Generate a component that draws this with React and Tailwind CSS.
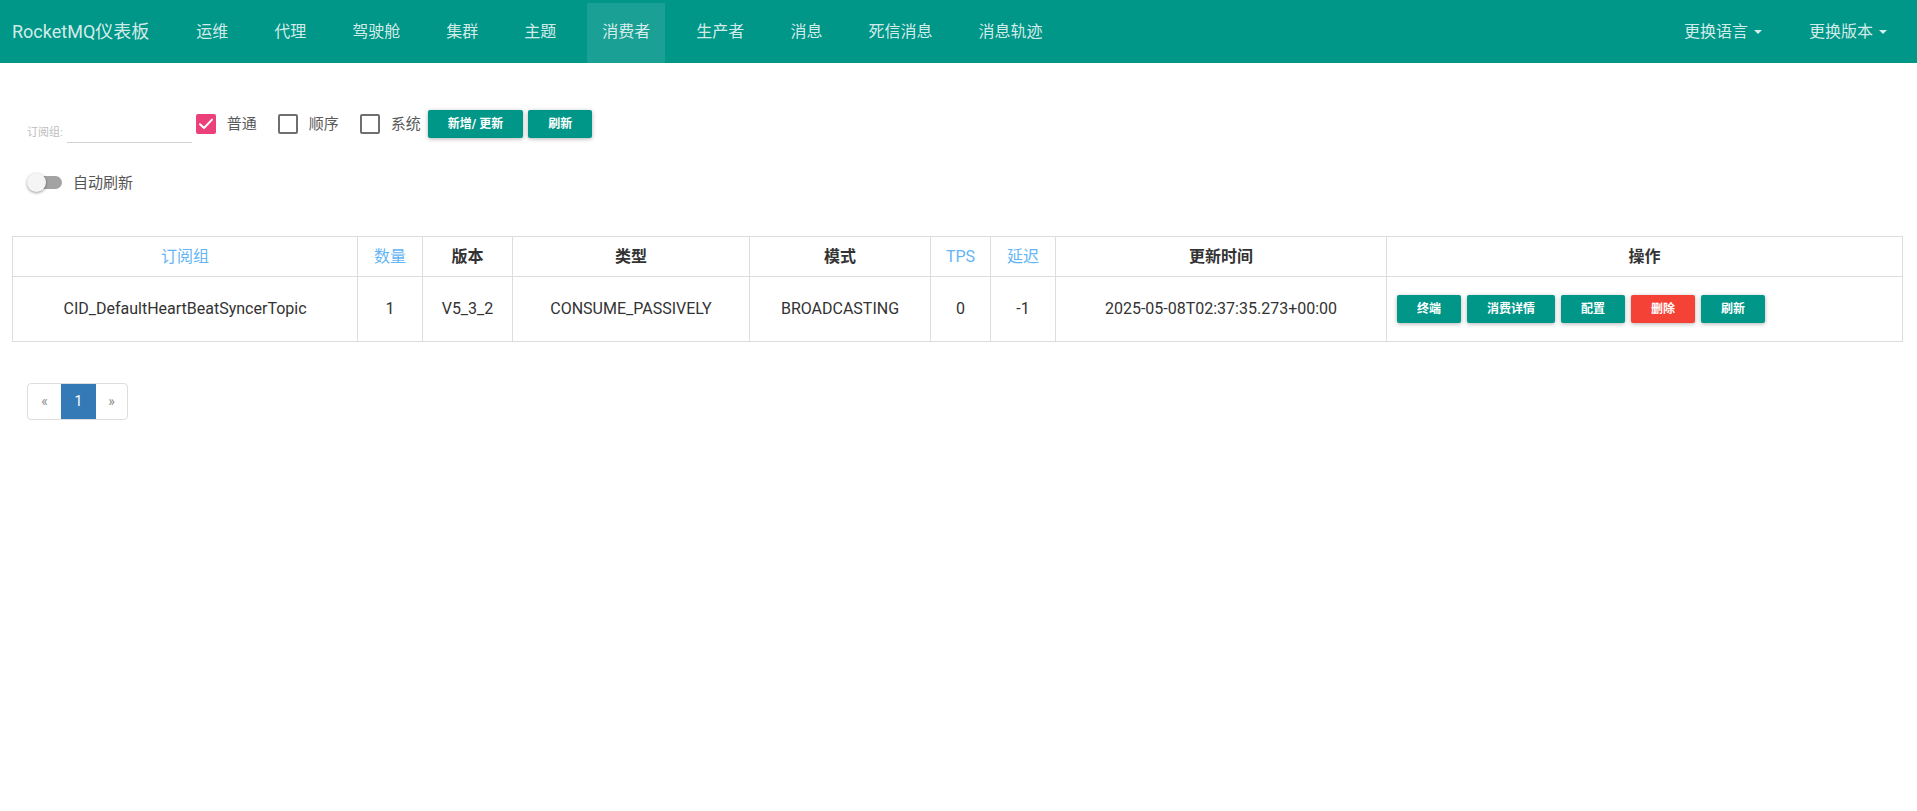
import React from "react";

const navItems = ["运维", "代理", "驾驶舱", "集群", "主题", "消费者", "生产者", "消息", "死信消息", "消息轨迹"];

function Caret() {
  return <span className="ml-[6px] inline-block h-0 w-0 border-x-[4px] border-t-[4px] border-x-transparent border-t-[rgba(255,255,255,0.84)] align-middle" />;
}

function Btn({ children, red }) {
  return (
    <button
      className={
        "h-[28px] rounded-[2px] px-[20px] text-[12px] font-bold text-white shadow-[0_1px_4px_rgba(0,0,0,0.3)] " +
        (red ? "bg-[#f44336]" : "bg-[#009688]")
      }
    >
      {children}
    </button>
  );
}

function Check({ checked, label, last }) {
  return (
    <div className={"mt-[4px] flex items-center " + (last ? "mr-[7px]" : "mr-[21px]")}>
      {checked ? (
        <span className="flex h-[20px] w-[20px] items-center justify-center rounded-[2px] bg-[#ec407a]">
          <svg width="18" height="18" viewBox="0 0 18 18" fill="none">
            <path d="M3 9.3 L7 13 L15 4.6" stroke="white" strokeWidth="2" strokeLinecap="round" strokeLinejoin="round" />
          </svg>
        </span>
      ) : (
        <span className="block h-[20px] w-[20px] rounded-[2px] border-2 border-[#6f6f6f]" />
      )}
      <span className="ml-[11px] text-[15px] leading-[20px] text-[#5a5a5a]">{label}</span>
    </div>
  );
}

export default function App() {
  const th = "border border-[#dddddd] h-[40px] text-center text-[16px]";
  const thBlue = th + " font-normal text-[#64b5f6]";
  const thDark = th + " font-bold text-[#333]";
  const td = "border border-[#dddddd] h-[65px] text-center text-[16px] text-[#333]";
  return (
    <div className="min-h-[811px] bg-white font-[Roboto,'Noto_Sans_CJK_SC',sans-serif]">
      <nav className="flex h-[63px] bg-[#009688] text-[rgba(255,255,255,0.84)]">
        <div className="flex h-full items-center pl-[12px] text-[18px]">RocketMQ仪表板</div>
        <div className="ml-[32px] flex h-full gap-[16px]">
          {navItems.map((n) => (
            <div
              key={n}
              className={
                "flex items-center px-[15px] text-[16px] " +
                (n === "消费者" ? "mt-[3px] h-[60px] bg-[rgba(255,255,255,0.1)] pb-[3px]" : "h-full")
              }
            >
              {n}
            </div>
          ))}
        </div>
        <div className="ml-auto flex h-full items-center gap-[17px] pr-[15px] text-[16px]">
          <div className="flex items-center px-[15px]">
            更换语言
            <Caret />
          </div>
          <div className="flex items-center px-[15px]">
            更换版本
            <Caret />
          </div>
        </div>
      </nav>

      <div className="px-[12px]">
        <div className="ml-[15px] mt-[47px] flex items-start">
          <div className="flex h-[33px] items-end">
            <span className="pb-[3px] text-[11px] leading-[14px] text-[#bdbdbd]">订阅组:</span>
            <div className="ml-[4px] h-[20px] w-[125px] border-b border-[#d2d2d2]" />
          </div>
          <div className="ml-[4px] flex items-start">
            <Check checked label="普通" />
            <Check label="顺序" />
            <Check label="系统" last />
          </div>
          <div className="flex gap-[5px]">
            <Btn>新增/ 更新</Btn>
            <Btn>刷新</Btn>
          </div>
        </div>

        <div className="ml-[15px] mt-[30px] flex h-[20px] items-center">
          <div className="relative h-[20px] w-[35px]">
            <div className="absolute left-[1px] top-[3px] h-[13px] w-[34px] rounded-full bg-[#a3a3a3]" />
            <div className="absolute left-0 top-0 h-[19px] w-[19px] rounded-full bg-[#f5f5f5] shadow-[0_1px_3px_rgba(0,0,0,0.4)]" />
          </div>
          <span className="ml-[11px] text-[15px] text-[#555]">自动刷新</span>
        </div>

        <table className="mt-[43px] w-[1890px] table-fixed border-collapse">
          <colgroup>
            <col className="w-[345px]" />
            <col className="w-[65px]" />
            <col className="w-[90px]" />
            <col className="w-[237px]" />
            <col className="w-[181px]" />
            <col className="w-[60px]" />
            <col className="w-[65px]" />
            <col className="w-[331px]" />
            <col className="w-[516px]" />
          </colgroup>
          <thead>
            <tr>
              <th className={thBlue}>订阅组</th>
              <th className={thBlue}>数量</th>
              <th className={thDark}>版本</th>
              <th className={thDark}>类型</th>
              <th className={thDark}>模式</th>
              <th className={thBlue}>TPS</th>
              <th className={thBlue}>延迟</th>
              <th className={thDark}>更新时间</th>
              <th className={thDark}>操作</th>
            </tr>
          </thead>
          <tbody>
            <tr>
              <td className={td}>CID_DefaultHeartBeatSyncerTopic</td>
              <td className={td}>1</td>
              <td className={td}>V5_3_2</td>
              <td className={td}>CONSUME_PASSIVELY</td>
              <td className={td}>BROADCASTING</td>
              <td className={td}>0</td>
              <td className={td}>-1</td>
              <td className={td}>2025-05-08T02:37:35.273+00:00</td>
              <td className={"border border-[#dddddd] h-[65px] px-[10px]"}>
                <div className="flex gap-[6px]">
                  <Btn>终端</Btn>
                  <Btn>消费详情</Btn>
                  <Btn>配置</Btn>
                  <Btn red>删除</Btn>
                  <Btn>刷新</Btn>
                </div>
              </td>
            </tr>
          </tbody>
        </table>

        <div className="ml-[15px] mt-[41px] flex h-[37px] w-fit overflow-hidden rounded-[4px] border border-[#dddddd] text-[14px]">
          <div className="flex w-[33px] items-center justify-center text-[#8a8a8a]">«</div>
          <div className="flex w-[35px] items-center justify-center bg-[#337ab7] text-white">1</div>
          <div className="flex w-[31px] items-center justify-center text-[#8a8a8a]">»</div>
        </div>
      </div>
    </div>
  );
}
